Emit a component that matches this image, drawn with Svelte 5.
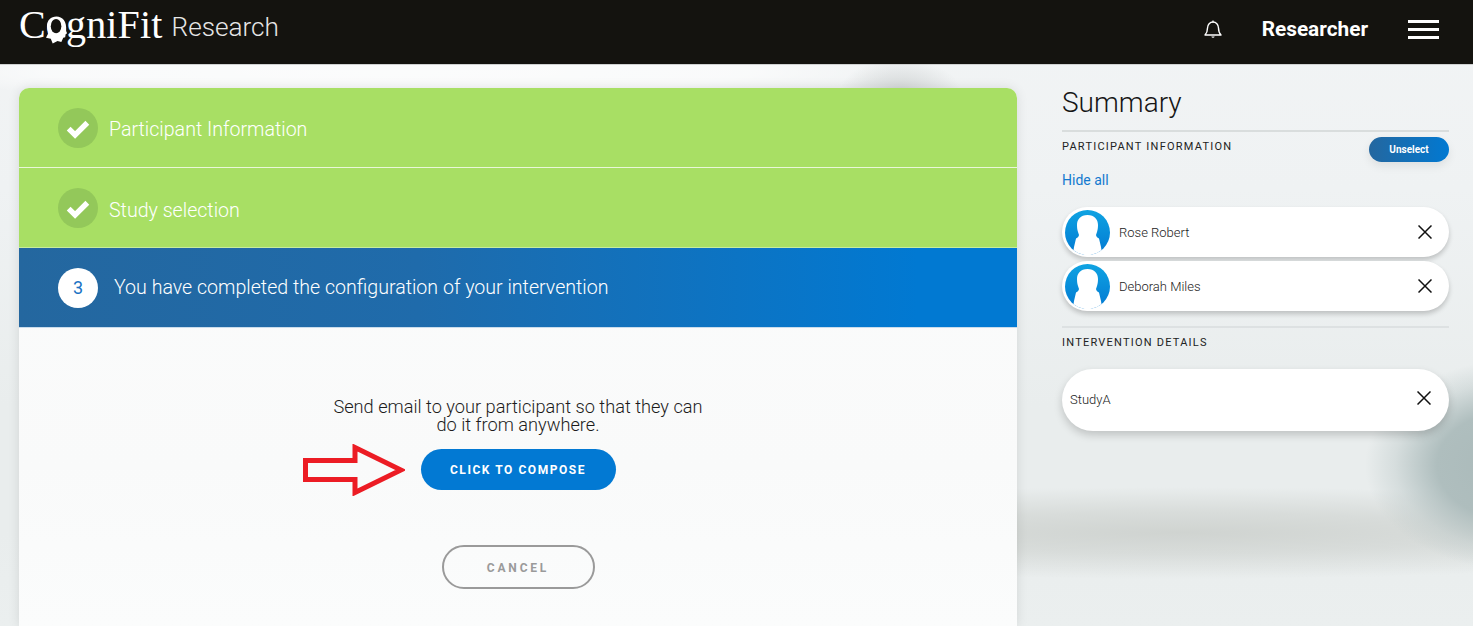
<script>
  const people = ["Rose Robert", "Deborah Miles"];
</script>

<div class="page">
  <header class="topbar">
    <div class="brand">
      <span class="wordmark">C<span class="o-wrap">o<svg class="head" viewBox="0 0 24 30" aria-hidden="true"><path d="M11 1C5 1 1 5 1 11c0 3 1 5 1.500 7L0 23l5 1 2 5 5-2.500 4 1 2-4.500 2-.5.5-3 1.500-1-1-2.500C22 6 17 1 11 1z" fill="#fff"/><ellipse cx="10.500" cy="11" rx="5.500" ry="7.500" fill="#14130f"/></svg></span>gniFit</span>
      <span class="product">Research</span>
    </div>
    <div class="topright">
      <svg class="bell" viewBox="0 0 20 20" aria-hidden="true"><path d="M2 16c1.500-1.500 2.500-2.500 2.500-7C4.500 5.500 7 3 10 3s5.500 2.500 5.500 6c0 4.500 1 5.500 2.500 7z" fill="none" stroke="#fff" stroke-width="1.400" stroke-linejoin="round"/><path d="M8.300 17.500a1.800 1.800 0 0 0 3.400 0z" fill="#fff"/><rect x="9.400" y="1.500" width="1.200" height="2" fill="#fff"/></svg>
      <span class="role">Researcher</span>
      <div class="burger"><i></i><i></i><i></i></div>
    </div>
  </header>

  <div class="content">
    <main class="card">
      <div class="step done">
        <span class="badge check"><svg viewBox="0 0 24 24" aria-hidden="true"><path d="M4 12.500l5.500 5.500L20 7.500" fill="none" stroke="#fff" stroke-width="4.600"/></svg></span>
        <span class="step-title first">Participant Information</span>
      </div>
      <div class="step done second">
        <span class="badge check"><svg viewBox="0 0 24 24" aria-hidden="true"><path d="M4 12.500l5.500 5.500L20 7.500" fill="none" stroke="#fff" stroke-width="4.600"/></svg></span>
        <span class="step-title low">Study selection</span>
      </div>
      <div class="step active">
        <span class="badge num">3</span>
        <span class="step-title wide">You have completed the configuration of your intervention</span>
      </div>
      <div class="body">
        <p class="lead">Send email to your participant so that they can<br />do it from anywhere.</p>
        <div class="compose-row">
          <svg class="arrow" viewBox="0 0 102 52" aria-hidden="true"><path d="M2.500 16.500H52V3.500L98 26 52 48.500V35.500H2.500z" fill="none" stroke="#ec1c24" stroke-width="5"/></svg>
          <button class="compose">CLICK TO COMPOSE</button>
        </div>
        <button class="cancel">CANCEL</button>
      </div>
    </main>

    <aside class="summary">
      <h1>Summary</h1>
      <div class="section-head">
        <h2>PARTICIPANT INFORMATION</h2>
        <button class="unselect">Unselect</button>
      </div>
      <a class="hide" href="#top">Hide all</a>
      <ul class="people">
        {#each people as name}
          <li class="pill">
            <svg class="avatar" viewBox="0 0 45 45" aria-hidden="true">
              <defs><linearGradient id="av" x1="0" y1="0" x2="0" y2="1"><stop offset="0" stop-color="#0fa3e2"/><stop offset="1" stop-color="#0279d2"/></linearGradient></defs>
              <circle cx="22.500" cy="22.500" r="22.500" fill="url(#av)"/>
              <path d="M22.500 5C15.500 5 12 9.500 12 15c0 3 .4 5 1 7l1 3c-.3 1.500-1 2.500-3 3.500L9 37l-.5 3.300A22.500 22.500 0 0 0 36.500 40.300L36 37l-2-8.500c-2-1-2.700-2-3-3.500l1-3c.6-2 1-4 1-7C33 9.500 29.500 5 22.500 5z" fill="#fff"/>
            </svg>
            <span class="name">{name}</span>
            <svg class="close" viewBox="0 0 14 14" aria-hidden="true"><path d="M.5.5l13 13M13.500.5l-13 13" stroke="#111" stroke-width="1.500" fill="none"/></svg>
          </li>
        {/each}
      </ul>
      <div class="section-head details"><h2>INTERVENTION DETAILS</h2></div>
      <div class="pill study">
        <span class="name">StudyA</span>
        <svg class="close" viewBox="0 0 14 14" aria-hidden="true"><path d="M.5.5l13 13M13.500.5l-13 13" stroke="#111" stroke-width="1.500" fill="none"/></svg>
      </div>
    </aside>
  </div>
</div>

<style>
  :global(body) { margin: 0; background: #eef1f2; }
  .page {
    width: 1473px; height: 626px; overflow: hidden;
    font-family: Roboto, "Liberation Sans", sans-serif;
    background:
      radial-gradient(ellipse 60px 30px at 900px 90px, rgba(200,204,204,.7) 0%, rgba(200,204,204,.3) 60%, rgba(200,204,204,0) 100%),
      radial-gradient(ellipse 500px 30px at 400px 72px, rgba(255,255,255,.75) 0%, rgba(255,255,255,.6) 70%, rgba(255,255,255,0) 100%),
      radial-gradient(ellipse 150px 105px at 1515px 465px, rgba(168,184,184,.98) 0%, rgba(170,186,186,.92) 52%, rgba(185,198,198,.4) 80%, rgba(185,198,198,0) 100%),
      radial-gradient(ellipse 640px 46px at 1180px 533px, rgba(207,211,208,.98) 0%, rgba(207,211,208,.65) 45%, rgba(207,211,208,0) 100%),
      linear-gradient(180deg, #f2f4f5 0%, #eff2f3 30%, #e9eded 65%, #e9eded 85%, #ebefef 100%);
  }
  .topbar {
    height: 65px; box-sizing: border-box; background: #14130f;
    border-bottom: 1px solid #cfd1d1;
    display: flex; align-items: center; justify-content: space-between;
    padding: 0 34px 6px 19px;
  }
  .brand { display: flex; align-items: baseline; gap: 9px; color: #fff; margin-top: -13px; }
  .wordmark { font-family: "Liberation Serif", serif; font-size: 40px; letter-spacing: .15px; transform: translateY(2px); }
  .o-wrap { position: relative; display: inline-block; }
  .head { position: absolute; left: 0; top: 14px; width: 23px; height: 30px; }
  .product { font-weight: 300; font-size: 26.200px; color: #e6e6e6; }
  .topright { display: flex; align-items: center; }
  .bell { width: 20px; height: 20px; }
  .role { font-weight: 700; font-size: 20.800px; color: #fff; margin-left: 39px; }
  .burger { margin-left: 40px; display: flex; flex-direction: column; gap: 5px; width: 31px; }
  .burger i { display: block; height: 3px; background: #fff; }

  .content { display: flex; align-items: flex-start; padding: 23px 24px 0 19px; }
  .card {
    width: 998px; flex: none; border-radius: 10px 10px 0 0; overflow: hidden;
    box-shadow: 0 0 12px rgba(0,0,0,.1); background: linear-gradient(180deg, #fcfcfc, #f9fafa 70%, #fbfcfc);
  }
  .step { height: 79px; box-sizing: border-box; display: flex; align-items: center; padding-left: 39px; color: #fff; font-weight: 300; font-size: 19.600px; }
  .done { background: #a8df64; }
  .second { height: 80px; border-top: 1px solid #e9f7d8; }
  .active { height: 80px; background: linear-gradient(90deg, #24679f 0%, #1f6bab 40%, #0179d2 90%); border-top: 1px solid #c8ec9c; }
  .badge { width: 40px; height: 40px; border-radius: 50%; flex: none; display: flex; align-items: center; justify-content: center; }
  .check { background: #93c85a; }
  .check svg { width: 28px; height: 28px; }
  .num { background: #fff; color: #1a72c4; font-size: 18px; font-weight: 400; }
  .step-title { margin-left: 11px; }
  .first { padding-top: 4px; }
  .low { padding-top: 5px; }
  .wide { margin-left: 16px; }
  .body { height: 299px; display: flex; flex-direction: column; align-items: center; border-top: 1px solid #c9dcec; }
  .lead { margin: 70px 0 0; text-align: center; font-size: 18.200px; line-height: 18px; font-weight: 300; color: #1c1c1c; }
  .compose-row { margin-top: 15px; position: relative; }
  .arrow { position: absolute; left: -118px; top: -5px; width: 102px; height: 52px; }
  .compose {
    display: block; width: 195px; height: 41px; border: 0; border-radius: 21px; background: #0279d3; color: #fff;
    font: 700 12px Roboto, sans-serif; letter-spacing: 1.550px; padding: 0;
  }
  .cancel {
    margin-top: 55px; width: 153px; height: 44px; border: 2px solid #9a9a9a; border-radius: 22px; background: transparent;
    color: #9a9a9a; font: 700 12px Roboto, sans-serif; letter-spacing: 2.800px; padding: 2px 0 0;
  }

  .summary { margin-left: 45px; width: 387px; flex: none; }
  h1 { margin: 1px 0 0; font-weight: 300; font-size: 28px; line-height: 28px; color: #161616; padding: 0 0 13px; border-bottom: 2px solid #d9dddd; }
  .section-head { display: flex; justify-content: space-between; align-items: flex-start; margin-top: 5px; }
  h2 { margin: 3px 0 0; font-weight: 400; font-size: 11px; line-height: 14px; letter-spacing: 1.230px; color: #222; }
  .unselect {
    width: 80px; height: 25px; border: 0; border-radius: 13px; color: #fff; padding: 0;
    background: linear-gradient(90deg, #24679f, #0179d2);
    font: 700 10px Roboto, sans-serif; box-shadow: 0 4px 10px rgba(0,0,0,.08);
  }
  .hide { display: block; margin-top: 9px; font-size: 14px; line-height: 18px; color: #1279cf; text-decoration: none; }
  .people { list-style: none; margin: 18px 0 0; padding: 0; display: flex; flex-direction: column; gap: 4px; padding-bottom: 15px; border-bottom: 2px solid #dde1e2; }
  .pill {
    background: #fff; height: 50px; border-radius: 25px; display: flex; align-items: center; position: relative;
    box-shadow: 0 3px 5px rgba(0,0,0,.2); padding-left: 3px; box-sizing: border-box;
  }
  .avatar { width: 45px; height: 45px; flex: none; }
  .name { font-size: 13px; font-weight: 300; color: #222; margin-left: 9px; padding-top: 1px; }
  .close { width: 14px; height: 14px; position: absolute; right: 17px; top: 18px; }
  .details { margin-top: 5px; }
  .study { height: 62px; border-radius: 31px; margin-top: 19px; padding-left: 8px; padding-bottom: 2px; box-shadow: 0 4px 8px rgba(0,0,0,.18); }
  .study .name { margin-left: 0; font-size: 13px; }
  .study .close { top: 22px; right: 18px; }
</style>
